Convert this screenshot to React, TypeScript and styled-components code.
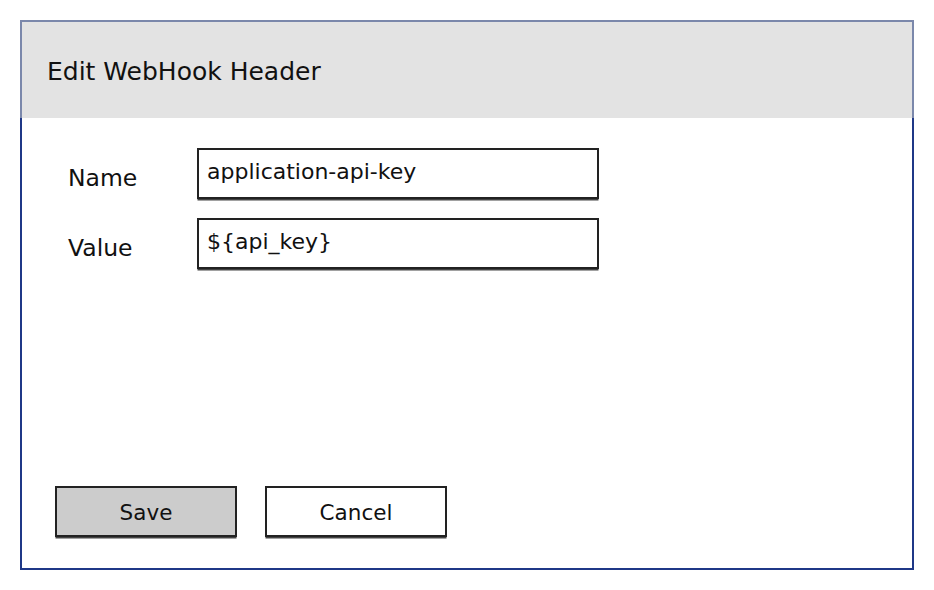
import React from 'react'
import styled, { createGlobalStyle } from 'styled-components'

const GlobalStyle = createGlobalStyle`
    html, body {
        margin: 0;
        padding: 0;
        background: #fff;
    }
    body {
        font-family: "Comic Sans MS", "DejaVu Sans", sans-serif;
        color: #111;
    }
`

const Page = styled.div`
    width: 934px;
    height: 590px;
    padding: 20px 20px 0 20px;
    box-sizing: border-box;
`

const Dialog = styled.div`
    width: 894px;
    height: 550px;
    display: flex;
    flex-direction: column;
    box-sizing: border-box;
`

const Header = styled.div`
    height: 98px;
    background: #e3e3e3;
    border: 2px solid #7b88ab;
    border-bottom: none;
    display: flex;
    align-items: center;
    padding-left: 25px;
    padding-top: 2px;
    box-sizing: border-box;
    font-size: 25px;
`

const Body = styled.div`
    flex: 1;
    border: 2px solid #1f3887;
    border-top: none;
    display: flex;
    flex-direction: column;
    justify-content: space-between;
    padding: 30px 0 31px 33px;
    box-sizing: border-box;
`

const Fields = styled.div`
    display: grid;
    grid-template-columns: 142px 402px;
    row-gap: 19px;
    align-items: center;
`

const Label = styled.div`
    font-size: 23.5px;
    padding-left: 13px;
    padding-top: 9px;
`

const Input = styled.div`
    height: 51px;
    border: 2px solid #222;
    box-shadow: 0 2px 0 -0.5px #444;
    box-sizing: border-box;
    display: flex;
    align-items: center;
    padding: 0 0 4px 8px;
    font-size: 22px;
    background: #fff;
`

const Actions = styled.div`
    display: flex;
    gap: 28px;
`

const Button = styled.div<{ primary?: boolean }>`
    width: 182px;
    height: 51px;
    border: 2px solid #222;
    box-shadow: 0 2px 0 -0.5px #444;
    box-sizing: border-box;
    background: ${({ primary }) => (primary ? '#cccccc' : '#fff')};
    display: flex;
    align-items: center;
    justify-content: center;
    font-size: 21.5px;
    padding-top: 2px;
`

export default function App() {
    return (
        <>
            <GlobalStyle />
            <Page>
                <Dialog>
                    <Header>Edit WebHook Header</Header>
                    <Body>
                        <Fields>
                            <Label>Name</Label>
                            <Input>application-api-key</Input>
                            <Label>Value</Label>
                            <Input>{'${api_key}'}</Input>
                        </Fields>
                        <Actions>
                            <Button primary>Save</Button>
                            <Button>Cancel</Button>
                        </Actions>
                    </Body>
                </Dialog>
            </Page>
        </>
    )
}
